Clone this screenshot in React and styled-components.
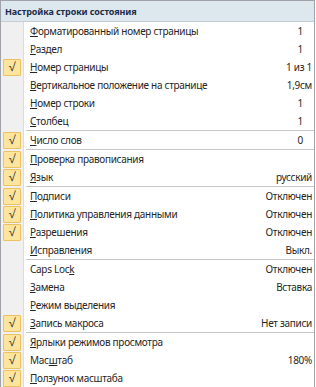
import React from 'react'
import styled, { createGlobalStyle } from 'styled-components'

const Global = createGlobalStyle`
  html, body {
    margin: 0;
    padding: 0;
    background: #ffffff;
  }
  body {
    font-family: "Noto Sans", "Open Sans", sans-serif;
  }
`

const Menu = styled.div`
  width: 313px;
  border: 1px solid #9fa3a8;
  border-bottom: none;
  background: #ffffff;
  overflow: hidden;
`

const Header = styled.div`
  height: 20px;
  display: flex;
  align-items: center;
  padding-left: 4px;
  background: #dde7ee;
  border-bottom: 1px solid #c5cdd6;
  color: #1b2d4a;
  font-size: 9px;
  font-weight: 700;
  letter-spacing: -0.1px;
`

const Row = styled.div`
  height: 18px;
  display: flex;
  align-items: stretch;
  color: #262626;
  font-size: 10px;
  letter-spacing: -0.3px;
`

const Gutter = styled.div`
  width: 22px;
  flex: none;
  display: flex;
  align-items: center;
  background: #f0f0f0;
  border-right: 1px solid #dcdcdc;
  box-shadow: 1px 0 0 #ffffff;
`

const Check = styled.div`
  width: 16px;
  height: 15px;
  margin-left: 2px;
  display: flex;
  align-items: center;
  justify-content: center;
  background: #fde59e;
  border: 1px solid #ecc162;
  border-radius: 1px;
  color: #3a3a3a;
  font-size: 12px;
  line-height: 1;
  letter-spacing: 0;
`

const Label = styled.div`
  flex: 1;
  display: flex;
  align-items: center;
  padding-left: 6px;
  white-space: nowrap;
`

const Value = styled.div`
  display: flex;
  align-items: center;
  padding-right: ${p => (p.$short ? 11 : 2)}px;
  white-space: nowrap;
`

const Sep = styled.div`
  height: 1px;
  display: flex;
`

const SepLine = styled.div`
  flex: 1;
  margin-left: 2px;
  background: #c6c6c6;
`

const Mn = styled.span`
  text-decoration: underline;
  text-underline-offset: 1px;
`

function Item({ pre = '', mn, post, value, checked, short }) {
  return (
    <Row>
      <Gutter>{checked && <Check>√</Check>}</Gutter>
      <Label>
        {pre}
        <Mn>{mn}</Mn>
        {post}
      </Label>
      {value && <Value $short={short}>{value}</Value>}
    </Row>
  )
}

function Divider() {
  return (
    <Sep>
      <Gutter />
      <SepLine />
    </Sep>
  )
}

export default function App() {
  return (
    <>
      <Global />
      <Menu>
        <Header>Настройка строки состояния</Header>
        <Item mn="Ф" post="орматированный номер страницы" value="1" short />
        <Item mn="Р" post="аздел" value="1" short />
        <Item mn="Н" post="омер страницы" value="1 из 1" checked />
        <Item mn="В" post="ертикальное положение на странице" value="1,9см" />
        <Item mn="Н" post="омер строки" value="1" short />
        <Item mn="С" post="толбец" value="1" short />
        <Divider />
        <Item mn="Ч" post="исло слов" value="0" short checked />
        <Divider />
        <Item mn="П" post="роверка правописания" checked />
        <Item mn="Я" post="зык" value="русский" checked />
        <Divider />
        <Item mn="П" post="одписи" value="Отключен" checked />
        <Item mn="П" post="олитика управления данными" value="Отключен" checked />
        <Item mn="Р" post="азрешения" value="Отключен" checked />
        <Item mn="И" post="справления" value="Выкл." />
        <Divider />
        <Item pre="Caps Loc" mn="k" value="Отключен" />
        <Item mn="З" post="амена" value="Вставка" />
        <Item mn="Р" post="ежим выделения" />
        <Item mn="З" post="апись макроса" value="Нет записи" checked />
        <Divider />
        <Item mn="Я" post="рлыки режимов просмотра" checked />
        <Item pre="Мас" mn="ш" post="таб" value="180%" checked />
        <Item mn="П" post="олзунок масштаба" checked />
      </Menu>
    </>
  )
}
